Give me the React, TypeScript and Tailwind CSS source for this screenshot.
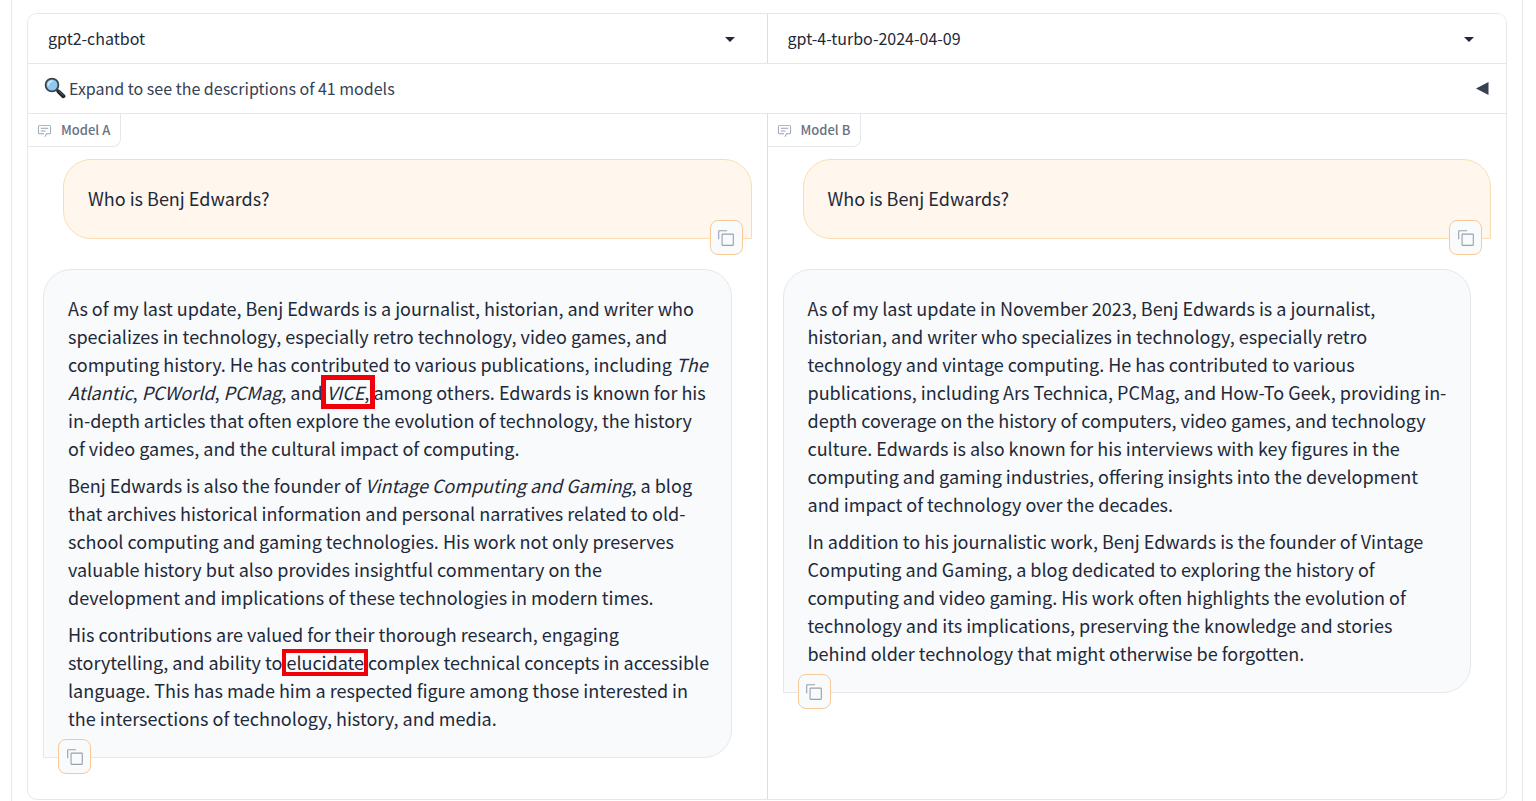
import { useState } from "react";
import type { ReactNode } from "react";

type Side = "user" | "bot";

const models = ["gpt2-chatbot", "gpt-4-turbo-2024-04-09"];

function ChatIcon() {
  return (
    <svg viewBox="0 0 32 32" className="size-[15px] text-gray-400" fill="currentColor" aria-hidden="true">
      <path d="M17.74 30L16 29l4-7h6a2 2 0 0 0 2-2V8a2 2 0 0 0-2-2H6a2 2 0 0 0-2 2v12a2 2 0 0 0 2 2h9v2H6a4 4 0 0 1-4-4V8a4 4 0 0 1 4-4h20a4 4 0 0 1 4 4v12a4 4 0 0 1-4 4h-4.84Z" />
      <path d="M8 10h16v2H8zm0 6h10v2H8z" />
    </svg>
  );
}

function CopyIcon() {
  return (
    <svg viewBox="0 0 32 32" className="size-[18px]" fill="currentColor" aria-hidden="true">
      <path d="M28 10v18H10V10h18m0-2H10a2 2 0 0 0-2 2v18a2 2 0 0 0 2 2h18a2 2 0 0 0 2-2V10a2 2 0 0 0-2-2Z" />
      <path d="M4 18H2V4a2 2 0 0 1 2-2h14v2H4Z" />
    </svg>
  );
}

function MagnifierIcon() {
  return (
    <svg viewBox="0 0 22 22" className="size-[22px]" fill="none" aria-hidden="true">
      <path d="M12.5 12.5l2.5 2.5" stroke="#4b5359" strokeWidth="2.5" />
      <path d="M14.6 14.6l4.8 4.6" stroke="#24282c" strokeWidth="4" strokeLinecap="round" />
      <path d="M15 14.2l4.2 4" stroke="#59636b" strokeWidth="1" strokeLinecap="round" />
      <circle cx="8" cy="8" r="6.4" fill="#8ec9f0" stroke="#39434b" strokeWidth="1.8" />
      <path d="M4.2 8.2a4 4 0 0 1 4-4" stroke="#d3edfc" strokeWidth="1.6" strokeLinecap="round" />
    </svg>
  );
}

function ModelSelect({ label, initial }: { label: string; initial: string }) {
  const [value, setValue] = useState(initial);
  return (
    <div className="relative flex-1">
      <select
        aria-label={label}
        value={value}
        onChange={(e) => setValue(e.target.value)}
        className="h-[49px] w-full appearance-none bg-white px-5 pb-[2px] text-base text-gray-800 outline-none"
      >
        {models.map((m) => (
          <option key={m}>{m}</option>
        ))}
      </select>
      <svg viewBox="0 0 10 5" className="pointer-events-none absolute top-[23px] right-8 h-[5px] w-[10px]" aria-hidden="true">
        <path d="M0 0h10L5 5z" fill="#1f2937" />
      </svg>
    </div>
  );
}

function Bubble({ side, children }: { side: Side; children: ReactNode }) {
  return (
    <div
      className={`relative flex flex-col gap-[9px] rounded-[28px] border pt-6 pr-5 pl-6 text-[18px] leading-7 text-gray-800 ${
        side === "user"
          ? "ml-5 rounded-br-none border-[#fbdcb0] bg-orange-50 pb-[26px]"
          : "mr-5 rounded-bl-none border-gray-200 bg-[#f8fafc] pb-[25px]"
      }`}
    >
      {children}
      <button
        aria-label="Copy message"
        className={`absolute -bottom-[17px] flex h-[35px] w-[33px] items-center justify-center rounded-lg border border-[#f8c898] bg-gray-50 text-gray-400 ${
          side === "user" ? "right-2" : "left-[14px]"
        }`}
      >
        <CopyIcon />
      </button>
    </div>
  );
}

function Marked({ children, tall }: { children: ReactNode; tall?: boolean }) {
  return (
    <span className="relative">
      {children}
      <span
        className={`absolute border-[#f00008] ${
          tall ? "-inset-x-[6px] -inset-y-1 border-[5px]" : "-inset-x-1 top-0 -bottom-px border-4"
        }`}
      />
    </span>
  );
}

function Chat({ name, children }: { name: string; children: ReactNode }) {
  return (
    <section aria-label={name} className="min-w-0 flex-1">
      <div className="flex h-[33px] w-fit items-center gap-[9px] rounded-br-lg border-r border-b border-gray-200 pr-[10px] pl-[9px] text-[13px] font-medium text-gray-500">
        <ChatIcon />
        {name}
      </div>
      <div className="flex flex-col gap-[30px] px-[15px] pt-3 pb-[41px]">
        <Bubble side="user">
          <p>Who is Benj Edwards?</p>
        </Bubble>
        <Bubble side="bot">{children}</Bubble>
      </div>
    </section>
  );
}

export default function App() {
  const [open, setOpen] = useState(false);

  return (
    <div className="min-h-screen bg-white pr-[13px] pl-[11px] font-['Noto_Sans_CJK_SC',sans-serif]">
      <main className="min-h-screen border-x border-gray-200 px-[15px] pt-[13px]">
        <div className="overflow-hidden rounded-[10px] border border-gray-200">
          <div className="flex divide-x divide-[#dcdee2]">
            <ModelSelect label="Model A" initial={models[0]} />
            <ModelSelect label="Model B" initial={models[1]} />
          </div>

          <button
            aria-expanded={open}
            onClick={() => setOpen(!open)}
            className="flex h-[51px] w-full items-center justify-between border-y border-gray-200 pr-[17px] pl-4 text-base text-gray-700"
          >
            <span className="flex items-center gap-[3px] pb-[2px]">
              <MagnifierIcon />
              Expand to see the descriptions of 41 models
            </span>
            <svg viewBox="0 0 13 13" className={`size-[13px] ${open ? "-rotate-90" : ""}`} aria-hidden="true">
              <path d="M0 6.5L12.5 0v13z" fill="#374151" />
            </svg>
          </button>

          <div className="flex divide-x divide-[#dcdee2]">
            <Chat name="Model A">
              <p>
                As of my last update, Benj Edwards is a journalist, historian, and writer who specializes in technology,
                especially retro technology, video games, and computing history. He has contributed to various
                publications, including <em>The Atlantic</em>, <em>PCWorld</em>, <em>PCMag</em>, and{" "}
                <Marked tall>
                  <em>VICE</em>,
                </Marked>{" "}
                among others. Edwards is known for his in-depth articles that often explore the evolution of technology,
                the history of video games, and the cultural impact of computing.
              </p>
              <p>
                Benj Edwards is also the founder of <em>Vintage Computing and Gaming</em>, a blog that archives
                historical information and personal narratives related to old-school computing and gaming technologies.
                His work not only preserves valuable history but also provides insightful commentary on the development
                and implications of these technologies in modern times.
              </p>
              <p>
                His contributions are valued for their thorough research, engaging storytelling, and ability to{" "}
                <Marked>elucidate</Marked> complex technical concepts in accessible language. This has made him a
                respected figure among those interested in the intersections of technology, history, and media.
              </p>
            </Chat>
            <Chat name="Model B">
              <p>
                As of my last update in November 2023, Benj Edwards is a journalist, historian, and writer who
                specializes in technology, especially retro technology and vintage computing. He has contributed to
                various publications, including Ars Technica, PCMag, and How-To Geek, providing in-depth coverage on the
                history of computers, video games, and technology culture. Edwards is also known for his interviews with
                key figures in the computing and gaming industries, offering insights into the development and impact of
                technology over the decades.
              </p>
              <p>
                In addition to his journalistic work, Benj Edwards is the founder of Vintage Computing and Gaming, a blog
                dedicated to exploring the history of computing and video gaming. His work often highlights the
                evolution of technology and its implications, preserving the knowledge and stories behind older
                technology that might otherwise be forgotten.
              </p>
            </Chat>
          </div>
        </div>
      </main>
    </div>
  );
}
